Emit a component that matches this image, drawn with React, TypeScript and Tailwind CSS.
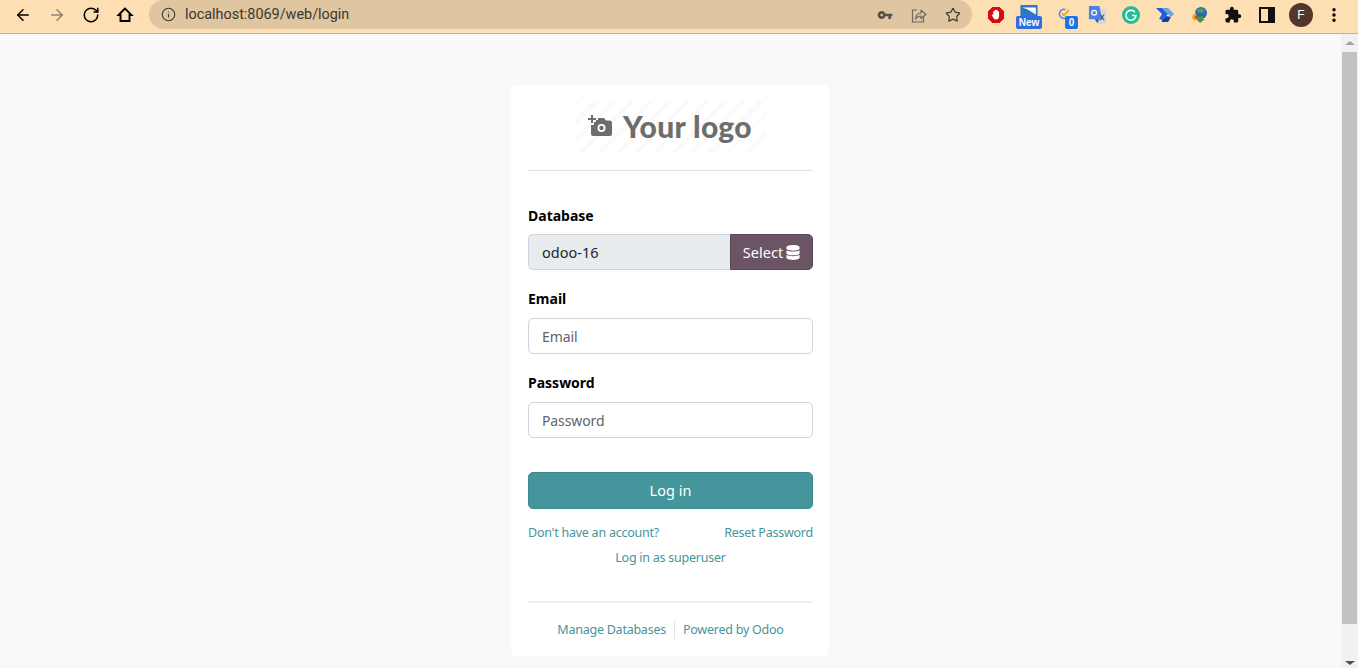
import React from "react";
import { ArrowLeft, ArrowRight, RotateCw, Info, Star, MoreVertical } from "lucide-react";
import { FaDatabase } from "react-icons/fa";

const Field: React.FC<{ label: string; placeholder: string; className?: string }> = ({ label, placeholder, className }) => (
  <div className={className}>
    <label className="block text-[14px] leading-[20px] font-bold text-black mb-[9px]">{label}</label>
    <input
      readOnly
      placeholder={placeholder}
      className="block w-full h-9 px-[13px] text-[14px] tracking-[-0.1px] bg-white border border-[#ced4da] rounded-[5px] outline-none placeholder:text-[#5f6468]"
    />
  </div>
);

const Extensions: React.FC = () => (
  <div className="flex items-center h-full">
    {/* stop hand */}
    <svg viewBox="0 0 20 20" className="w-[18px] h-[18px] ml-[15px]">
      <path d="M6 .5h8L19.500 6v8L14 19.500H6L.5 14V6z" fill="#d80a0a" stroke="#fff3e0" strokeWidth="1" />
      <path d="M7 10V6.500a1 1 0 0 1 1.600-.6V5a1 1 0 0 1 1.700-.4 1 1 0 0 1 1.600.6v1a1 1 0 0 1 1.500.7V11c0 2.500-1.400 4-3.400 4-1.500 0-2.300-.7-3-2l-1.500-2.400c-.4-.8.6-1.500 1.300-.8z" fill="#fff" />
    </svg>
    {/* new badge */}
    <div className="relative w-[26px] h-[26px] ml-[11px]">
      <svg viewBox="0 0 20 14" className="absolute left-[4px] top-[3px] w-[18px] h-[12px]">
        <rect width="20" height="14" rx="1" fill="#2b78c9" />
        <path d="M2 3h16v8L8 5z" fill="#fff" />
      </svg>
      <span className="absolute left-0 top-[14px] w-[26px] h-[13px] rounded-[2px] bg-[#2b6fe0] text-white text-[10px] leading-[13px] font-bold text-center font-['Liberation_Sans',sans-serif]">New</span>
    </div>
    {/* todo check */}
    <div className="relative w-[24px] h-[24px] ml-[15px]">
      <svg viewBox="0 0 20 20" className="absolute left-0 top-[4px] w-[14px] h-[14px]">
        <path d="M12 3.500A6.500 6.500 0 1 0 15 14" fill="none" stroke="#5a86e6" strokeWidth="2.200" />
        <path d="M7 9l3 3 7-8" fill="none" stroke="#f2a51f" strokeWidth="2.600" />
      </svg>
      <span className="absolute left-[8px] top-[13px] w-[13px] h-[13px] rounded-[2px] bg-[#1a73e8] text-white text-[10px] leading-[13px] font-bold text-center font-['Liberation_Sans',sans-serif]">0</span>
    </div>
    {/* translate */}
    <svg viewBox="0 0 20 20" className="w-[19px] h-[19px] ml-[7px]">
      <path d="M9 3h9a1 1 0 0 1 1 1v14a1 1 0 0 1-1 1H9z" fill="#d5d9de" />
      <path d="M1 0h11l3 14H1z" fill="#4a82e8" />
      <path d="M7 14h5l-2 4z" fill="#2a56b8" />
      <circle cx="6.500" cy="7" r="2.500" fill="none" stroke="#fff" strokeWidth="1.300" />
      <path d="M13 9l4 6m0-6l-4 6" stroke="#555" strokeWidth="1.200" />
    </svg>
    {/* grammarly */}
    <svg viewBox="0 0 18 18" className="w-[18px] h-[18px] ml-[15px]">
      <circle cx="9" cy="9" r="9" fill="#22bd94" />
      <path d="M13 6.200A5 5 0 1 0 14 9.500h-4" fill="none" stroke="#fff" strokeWidth="1.600" />
    </svg>
    {/* power automate */}
    <svg viewBox="0 0 18 14" className="w-[18px] h-[14px] ml-[16px]">
      <path d="M6 0h6l6 6-3 3z" fill="#5aa8f5" />
      <path d="M0 0h6l6 6-6 6-3-1 3-5z" fill="#2160d8" />
      <path d="M6 12l4-4 5 1-3 5H6z" fill="#0f3fa8" />
    </svg>
    {/* idm globe */}
    <svg viewBox="0 0 18 18" className="w-[18px] h-[18px] ml-[17px]">
      <circle cx="10" cy="7" r="6" fill="#2a66b8" />
      <path d="M6 4c2-2 6-2 8 0l-3 3-4-.5z" fill="#4da34a" />
      <path d="M1 12c0-3 2-5 4-5l2 5-3 3z" fill="#e8b020" />
      <path d="M3 12l3-4 1 5z" fill="#d84030" />
      <path d="M6 11l6-1-1 3h3l-5 4-4-4h2z" fill="#3f9a36" />
    </svg>
    {/* extensions puzzle */}
    <svg viewBox="0 0 24 24" className="w-[18px] h-[18px] ml-[15px]">
      <path d="M20.500 11H19V7c0-1.100-.9-2-2-2h-4V3.500C13 2.120 11.880 1 10.500 1S8 2.120 8 3.500V5H4c-1.100 0-1.990.9-1.990 2v3.800H3.500c1.490 0 2.700 1.210 2.700 2.700s-1.210 2.700-2.700 2.700H2V20c0 1.100.9 2 2 2h3.800v-1.500c0-1.490 1.210-2.700 2.700-2.700 1.490 0 2.700 1.210 2.700 2.700V22H17c1.100 0 2-.9 2-2v-4h1.500c1.380 0 2.500-1.120 2.500-2.500S21.880 11 20.500 11z" fill="#111" />
    </svg>
    {/* side panel */}
    <svg viewBox="0 0 16 16" className="w-[16px] h-[16px] ml-[17px]">
      <rect x="1" y="1" width="14" height="14" fill="none" stroke="#111" strokeWidth="2" />
      <rect x="9" y="1" width="6" height="14" fill="#111" />
    </svg>
    <div className="w-6 h-6 ml-[14px] rounded-full bg-[#53362c] text-white text-[12px] leading-6 text-center font-['Liberation_Sans',sans-serif]">F</div>
    <MoreVertical className="w-[18px] h-[18px] ml-[12px] text-black" strokeWidth={2.500} />
  </div>
);

const Scrollbar: React.FC = () => (
  <div className="w-[17px] flex flex-col bg-[#f1f1f1] shrink-0">
    <div className="h-[18px] flex items-center justify-center">
      <div className="w-0 h-0 border-x-[5px] border-x-transparent border-b-[4px] border-b-[#a3a3a3]" />
    </div>
    <div className="h-[572px] mx-[1px] bg-[#c1c1c1]" />
    <div className="flex-1 flex items-end justify-center pb-[3px]">
      <div className="w-0 h-0 border-x-[5px] border-x-transparent border-t-[4px] border-t-[#505050]" />
    </div>
  </div>
);

export default function App() {
  return (
    <div className="w-[1358px] h-[668px] flex flex-col overflow-hidden font-['Noto_Sans',sans-serif] bg-[#f8f9fa]">
      {/* browser toolbar */}
      <div className="h-[34px] shrink-0 flex items-start bg-[#fedfb3] border-b border-[#c9ae8f] pl-[14px]">
        <div className="flex items-center h-[30px]">
          <ArrowLeft className="w-[18px] h-[18px] text-black" strokeWidth={2} />
          <ArrowRight className="w-[18px] h-[18px] ml-4 text-[#8f8274]" strokeWidth={2} />
          <RotateCw className="w-[18px] h-[18px] ml-4 text-black" strokeWidth={2} />
          <svg viewBox="0 0 18 18" className="w-[18px] h-[18px] ml-4">
            <path d="M9 2.500L2.500 9H4.500V15H13.500V9H15.500z" fill="none" stroke="#000" strokeWidth="1.900" strokeLinejoin="miter" />
          </svg>
        </div>
        <div className="w-[823px] h-[29px] ml-[15px] rounded-full bg-[#dfc5a0] flex items-center pl-[12px] pr-[11px]">
          <Info className="w-[15px] h-[15px] text-[#3c3a36]" strokeWidth={1.800} />
          <span className="ml-[9px] text-[14.4px] text-[#3b3832] flex-1 font-['Roboto',sans-serif]">localhost:8069/web/login</span>
          {/* key */}
          <svg viewBox="0 0 24 24" className="w-4 h-4 text-[#55504a]">
            <path d="M12.650 10C11.830 7.670 9.610 6 7 6c-3.310 0-6 2.690-6 6s2.690 6 6 6c2.610 0 4.830-1.670 5.650-4H17v4h4v-4h2v-4H12.650zM7 14c-1.100 0-2-.9-2-2s.9-2 2-2 2 .9 2 2-.9 2-2 2z" fill="currentColor" />
          </svg>
          {/* share */}
          <svg viewBox="0 0 16 16" className="w-4 h-4 ml-[18px]">
            <path d="M6 3H1.500V15H12.500V10" fill="none" stroke="#6d675e" strokeWidth="1.200" />
            <path d="M4.500 12C5 8 7.500 6 10 6V3.200L15 7.500 10 11.500V9C8 9 6 10 4.500 12z" fill="none" stroke="#6d675e" strokeWidth="1.200" strokeLinejoin="round" />
          </svg>
          <Star className="w-4 h-4 ml-[18px] text-[#3f3c37]" strokeWidth={1.800} />
        </div>
        <div className="h-[30px]">
          <Extensions />
        </div>
      </div>

      <div className="flex-1 flex min-h-0">
        <div className="flex-1 flex justify-center pt-[51px] pr-px">
          {/* login card */}
          <div className="w-[318px] h-[571px] bg-white rounded-[5px] pl-[17px] pr-[16px] pt-4">
            <div className="w-[192px] h-[52px] mx-auto flex items-center justify-center gap-[11px] bg-[repeating-linear-gradient(135deg,#fafafa_0,#fafafa_4px,#ffffff_4px,#ffffff_13px)]">
              <svg viewBox="0 0 24 24" className="w-6 h-6 -mt-[2px] -ml-[1px]">
                <path d="M3 1v3H0v2h3v3h2V6h3V4H5V1z" fill="#6d6d6d" />
                <path d="M8 6h2V4h6l2 2.500h3.500A2.500 2.500 0 0 1 24 9v11a2 2 0 0 1-2 2H5a2 2 0 0 1-2-2V11h3V8h2z" fill="#6d6d6d" />
                <circle cx="13.500" cy="14" r="4" fill="#fff" />
                <circle cx="13.500" cy="14" r="2.200" fill="#6d6d6d" />
              </svg>
              <span className="text-[30px] tracking-[0.3px] leading-none font-black text-[#6d6d6d] -mt-[2px] font-['Lato',sans-serif]">Your logo</span>
            </div>
            <div className="h-px bg-[#dee2e6] mt-[17px]" />

            <label className="block text-[14px] leading-[20px] font-bold text-black mt-[35px] mb-[8px]">Database</label>
            <div className="flex h-9">
              <div className="flex-1 flex items-center pl-[13px] pt-px text-[14.5px] text-[#212529] bg-[#e9ecef] border border-[#ced4da] border-r-0 rounded-l-[5px]">odoo-16</div>
              <button className="w-[83px] flex items-center justify-center gap-[3px] pt-px text-[14.5px] text-white bg-[#6b5464] border border-[#5e4858] rounded-r-[5px]">
                Select
                <FaDatabase className="w-[14px] h-[15px] text-white" />
              </button>
            </div>

            <Field label="Email" placeholder="Email" className="mt-[19px]" />
            <Field label="Password" placeholder="Password" className="mt-[19px]" />

            <button className="block w-full h-[37px] mt-[34px] text-[14.5px] text-white bg-[#45959c] border border-[#3b8a91] rounded-[5px]">Log in</button>

            <div className="flex justify-between mt-[15px] text-[12.5px] tracking-[-0.24px] leading-[18px] text-[#45959c]">
              <a>Don't have an account?</a>
              <a>Reset Password</a>
            </div>
            <div className="mt-[7px] text-center text-[12.5px] tracking-[-0.24px] leading-[18px] text-[#45959c]">
              <a>Log in as superuser</a>
            </div>

            <div className="h-[2px] bg-[#eeeff2] mt-[34px]" />

            <div className="flex justify-center items-center mt-[18px] text-[12.5px] tracking-[-0.24px] leading-[18px] text-[#45959c]">
              <a>Manage Databases</a>
              <span className="w-px h-[18px] bg-[#dee2e6] mx-2" />
              <a>Powered by Odoo</a>
            </div>
          </div>
        </div>
        <Scrollbar />
      </div>
    </div>
  );
}
